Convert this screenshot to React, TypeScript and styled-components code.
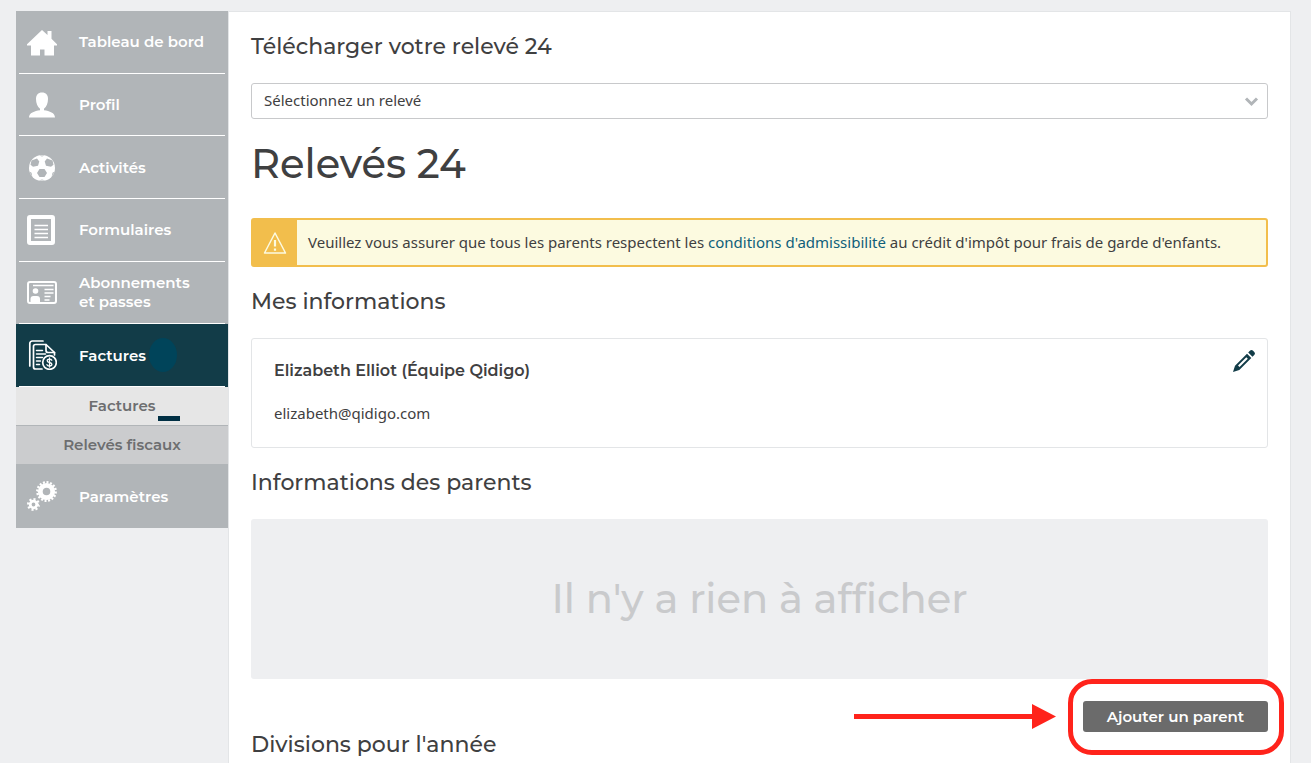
import React from "react";
import styled, { createGlobalStyle, css } from "styled-components";

const heading = `Montserrat, Inter, sans-serif`;
const text = `"Noto Sans", "Open Sans", sans-serif`;

const GlobalStyle = createGlobalStyle`
  *, *::before, *::after { box-sizing: border-box; }
  body {
    margin: 0;
    background: #eeeff1;
    color: #3f4041;
    font: 400 15px/20px ${text};
  }
  ul, h1, h2, h3, p { margin: 0; padding: 0; }
  ul { list-style: none; }
`;

const Page = styled.div`
  display: flex;
  min-height: 100vh;
  padding: 11px 20px 0 16px;
`;

const Sidebar = styled.nav`
  flex: none;
  align-self: flex-start;
  width: 212px;
  background: #b1b5b8;
  font-family: ${heading};
`;

const Menu = styled.ul`
  display: grid;
  grid-auto-rows: 1fr;
  height: 376px;
`;

const MenuItem = styled.li<{ $active?: boolean }>`
  display: flex;
  padding: 0 3px;
  background: ${(p) => (p.$active ? "#123c48" : "transparent")};
`;

const MenuLink = styled.a<{ $last?: boolean }>`
  flex: 1;
  display: flex;
  align-items: center;
  gap: 22px;
  padding-left: 8px;
  border-bottom: ${(p) => (p.$last ? "0" : "1px solid #fff")};
  color: #fff;
  font-size: 15px;
  font-weight: 600;
  line-height: 19px;
  text-decoration: none;

  svg { flex: none; }
`;

const LastItem = styled.div`
  display: flex;
  height: 64px;
  padding: 0 3px;
`;

const MenuLabel = styled.span`
  position: relative;
`;

const Blot = styled.span`
  position: absolute;
  left: 70px;
  top: -8px;
  width: 28px;
  height: 34px;
  border-radius: 50%;
  background: #00445a;
`;

const Dash = styled.span`
  position: absolute;
  left: 142px;
  bottom: 4px;
  width: 22px;
  height: 5px;
  background: #002f44;
`;

const SubItem = styled.li<{ $current?: boolean }>`
  position: relative;
  background: ${(p) => (p.$current ? "#e6e6e6" : "#cbccce")};
  ${(p) => p.$current && css`border-bottom: 1px solid #b1b5b8;`}
`;

const SubLink = styled.a`
  display: block;
  color: #6d6e70;
  font-size: 15px;
  font-weight: 600;
  line-height: 38px;
  text-align: center;
  text-decoration: none;
`;

const Panel = styled.main`
  flex: 1;
  min-width: 0;
  padding: 21px 22px 3px;
  background: #fff;
  border: 1px solid #e3e5e7;
  border-bottom: 0;
`;

const Title = styled.h1`
  margin: 21px 0 30px;
  font: 500 40px/48px ${heading};
`;

const Subtitle = styled.h2`
  margin: 21px 0 22px;
  font: 500 22px/28px ${heading};

  &:first-child { margin-top: 0; }
`;

const SelectField = styled.div`
  display: grid;
  align-items: center;

  > * { grid-area: 1 / 1; }
  svg { justify-self: end; margin: 2px 9px 0 0; pointer-events: none; }
`;

const Select = styled.select`
  appearance: none;
  width: 100%;
  height: 36px;
  padding: 0 36px 2px 12px;
  border: 1px solid #c8c9cb;
  border-radius: 3px;
  background: #fff;
  color: #3f4041;
  font: 400 15px/20px ${text};
`;

const Alert = styled.div`
  display: flex;
  border: 2px solid #f2be4c;
  border-radius: 3px;
  background: #fcfae0;
`;

const AlertIcon = styled.div`
  display: flex;
  align-items: center;
  justify-content: center;
  width: 44px;
  background: #f2be4c;
`;

const AlertText = styled.p`
  padding: 12px 11px 13px;
`;

const TextLink = styled.a`
  color: #0f5f7a;
  text-decoration: none;
`;

const Card = styled.section`
  display: flex;
  justify-content: space-between;
  align-items: flex-start;
  height: 110px;
  padding: 11px 12px 0 22px;
  border: 1px solid #e3e5e7;
  border-radius: 3px;
`;

const Person = styled.h3`
  margin: 11px 0 22px;
  font: 600 16px/20px ${heading};
`;

const IconButton = styled.button`
  display: flex;
  padding: 0;
  border: 0;
  background: none;
  cursor: pointer;
`;

const Empty = styled.div`
  display: flex;
  align-items: center;
  justify-content: center;
  height: 160px;
  border-radius: 3px;
  background: #eeeff1;
  color: #c9cacc;
  font: 500 40px/48px ${heading};
`;

const Footer = styled.div`
  display: flex;
  justify-content: space-between;
  align-items: flex-start;
  margin-top: 22px;
`;

const FooterTitle = styled.h2`
  margin-top: 30px;
  font: 500 22px/28px ${heading};
`;

const ActionArea = styled.div`
  position: relative;
`;

const Button = styled.button`
  display: block;
  width: 185px;
  height: 31px;
  padding: 0;
  border: 0;
  border-radius: 3px;
  background: #6b6b6b;
  color: #fff;
  font: 600 15px/20px ${heading};
  cursor: pointer;
`;

const Highlight = styled.span`
  position: absolute;
  inset: -22px -16px -23px -15px;
  border: 5px solid #ff231b;
  border-radius: 24px;
  pointer-events: none;
`;

const Arrow = styled.svg`
  position: absolute;
  right: 212px;
  top: 3px;
  pointer-events: none;
`;

const HomeIcon = () => (
  <svg width="30" height="30" viewBox="0 0 30 30" fill="#fff" aria-hidden="true">
    <path d="M15 3 20.500 8V4H24.500V11.800L30 17.200V18.500H27V28.500H17.500V22.500H13V28.500H4V18.500H0V17.200Z" />
  </svg>
);

const ProfileIcon = () => (
  <svg width="30" height="30" viewBox="0 0 30 30" fill="#fff" aria-hidden="true">
    <path d="M15 3.500c4 0 6 2.500 6 6.500 0 4.500-1.500 7.500-4 9.800v1.400c5.500.8 11 2.500 11 7.300H2c0-4.800 5.500-6.500 11-7.300v-1.400C10.500 17.500 9 14.500 9 10c0-4 2-6.500 6-6.500Z" />
  </svg>
);

const BallIcon = () => (
  <svg width="30" height="30" viewBox="0 0 30 30" aria-hidden="true">
    <circle cx="15" cy="16" r="13" fill="#fff" />
    <g fill="#b1b5b8">
      <path d="M12.500 17h5l2.500 4-2.500 4h-5l-2.500-4Z" />
      <path d="M4.500 8.500 10 6.500l2.300 3-1.300 4.300-5 .9-2.500-2Z" />
      <path d="M25.500 8.500 20 6.500l-2.300 3 1.300 4.300 5 .9 2.500-2Z" />
      <path d="M2.200 19.500l2.300 1.200.8 4Z" />
      <path d="M27.800 19.500l-2.300 1.200-.8 4Z" />
      <path d="M12.300 3.500h5.400L15 4.600Z" />
      <path d="M11.500 28.600l3.500-1 3.500 1Z" />
    </g>
  </svg>
);

const FormIcon = () => (
  <svg width="30" height="30" viewBox="0 0 30 30" fill="none" stroke="#fff" aria-hidden="true">
    <rect x="2" y="2" width="24" height="26" rx="1" strokeWidth="4" />
    <path d="M7.500 10.500h13.500M7.500 14.500h13.500M7.500 18.500h13.500M7.500 22.500h13.500" strokeWidth="1.600" />
  </svg>
);

const PassIcon = () => (
  <svg width="30" height="30" viewBox="0 0 30 30" fill="none" stroke="#fff" aria-hidden="true">
    <rect x="1" y="5" width="28" height="21" rx="2" strokeWidth="2" />
    <path d="M6 8.500h20.500M17.500 12.500h9M17.500 16h9M17.500 19.500h6M17.500 23h5" strokeWidth="1.500" />
    <circle cx="8.500" cy="14" r="2.800" fill="#fff" stroke="none" />
    <path d="M3.500 25v-3a3 3 0 0 1 3-3H10a3 3 0 0 1 3 3v3Z" fill="#fff" stroke="none" />
  </svg>
);

const InvoiceIcon = () => (
  <svg width="30" height="30" viewBox="0 0 30 30" fill="none" stroke="#fff" strokeWidth="1.700" strokeLinecap="round" strokeLinejoin="round" aria-hidden="true">
    <path d="M2.800 26V3.500a2.500 2.500 0 0 1 2.500-2.500H16" />
    <path d="M15 29H8.500a2 2 0 0 1-2-2V6.500a2 2 0 0 1 2-2H19l8.500 8V15" />
    <path d="M19 4.500v6a2 2 0 0 0 2 2h6.500" />
    <path d="M9.500 10.500h6M9.500 14h9M9.500 17.500h6M9.500 21h4M9.500 24.500h3" strokeWidth="1.500" />
    <circle cx="22.500" cy="22.500" r="6.800" />
    <path d="M24.800 20.200c-.4-.8-1.200-1.100-2.300-1.100-1.400 0-2.300.6-2.300 1.600 0 2.400 4.700 1.200 4.700 3.600 0 1-.9 1.700-2.400 1.700-1.200 0-2.100-.4-2.500-1.300M22.500 18v9" strokeWidth="1.300" />
  </svg>
);

const GearsIcon = () => (
  <svg width="30" height="30" viewBox="0 0 30 30" fill="none" stroke="#fff" aria-hidden="true">
    <circle cx="19.500" cy="10.500" r="6.200" strokeWidth="4.800" />
    <circle cx="19.500" cy="10.500" r="9.200" strokeWidth="2.400" pathLength="32" strokeDasharray="1.100 0.900" />
    <circle cx="6.500" cy="23.500" r="3.300" strokeWidth="2.800" />
    <circle cx="6.500" cy="23.500" r="5.400" strokeWidth="2.200" pathLength="16" strokeDasharray="1 1" />
  </svg>
);

const WarningIcon = () => (
  <svg width="24" height="24" viewBox="0 0 24 24" fill="none" stroke="#fcfae0" aria-hidden="true">
    <path d="M12 2 22.500 22H1.500Z" strokeWidth="1.500" strokeLinejoin="round" />
    <path d="M12 9v6.500M12 17.500v2.200" strokeWidth="2.200" />
  </svg>
);

const PencilIcon = () => (
  <svg width="22" height="22" viewBox="0 0 22 22" fill="#123c48" aria-hidden="true">
    <path d="M15.200 2.500l1.700-1.700c1-1 2.200-1 3.200 0l1.100 1.100c1 1 1 2.200 0 3.200l-1.700 1.700Z" />
    <path fillRule="evenodd" d="M14 3.700 18.300 8 6.300 20 0 22l2-6.300ZM13.300 7.200 5 15.500l1.500 1.500 8.300-8.300Z" />
  </svg>
);

const ChevronIcon = () => (
  <svg width="15" height="10" viewBox="0 0 15 10" fill="none" stroke="#b1b5b8" strokeWidth="3" aria-hidden="true">
    <path d="M2 1.500 7.500 7 13 1.500" />
  </svg>
);

const entries = [
  { label: "Tableau de bord", Icon: HomeIcon },
  { label: "Profil", Icon: ProfileIcon },
  { label: "Activités", Icon: BallIcon },
  { label: "Formulaires", Icon: FormIcon },
  { label: <>Abonnements<br />et passes</>, Icon: PassIcon },
  { label: "Factures", Icon: InvoiceIcon, active: true },
];

export default function App() {
  return (
    <>
      <GlobalStyle />
      <Page>
        <Sidebar>
          <Menu>
            {entries.map(({ label, Icon, active }, i) => (
              <MenuItem key={i} $active={active}>
                <MenuLink href="#">
                  <Icon />
                  <MenuLabel>
                    {label}
                    {active && <Blot />}
                  </MenuLabel>
                </MenuLink>
              </MenuItem>
            ))}
          </Menu>
          <ul>
            <SubItem $current>
              <SubLink href="#">Factures</SubLink>
              <Dash />
            </SubItem>
            <SubItem>
              <SubLink href="#">Relevés fiscaux</SubLink>
            </SubItem>
          </ul>
          <LastItem>
            <MenuLink href="#" $last>
              <GearsIcon />
              <MenuLabel>Paramètres</MenuLabel>
            </MenuLink>
          </LastItem>
        </Sidebar>

        <Panel>
          <Subtitle id="download">Télécharger votre relevé 24</Subtitle>
          <SelectField>
            <Select aria-labelledby="download">
              <option>Sélectionnez un relevé</option>
            </Select>
            <ChevronIcon />
          </SelectField>

          <Title>Relevés 24</Title>
          <Alert>
            <AlertIcon><WarningIcon /></AlertIcon>
            <AlertText>
              Veuillez vous assurer que tous les parents respectent les{" "}
              <TextLink href="#">conditions d'admissibilité</TextLink> au crédit d'impôt pour frais de garde d'enfants.
            </AlertText>
          </Alert>

          <Subtitle>Mes informations</Subtitle>
          <Card>
            <div>
              <Person>Elizabeth Elliot (Équipe Qidigo)</Person>
              <p>elizabeth@qidigo.com</p>
            </div>
            <IconButton type="button" aria-label="Modifier"><PencilIcon /></IconButton>
          </Card>

          <Subtitle>Informations des parents</Subtitle>
          <Empty>Il n'y a rien à afficher</Empty>

          <Footer>
            <FooterTitle>Divisions pour l'année</FooterTitle>
            <ActionArea>
              <Button type="button">Ajouter un parent</Button>
              <Highlight />
              <Arrow width="202" height="26" viewBox="0 0 202 26" fill="#ff231b" aria-hidden="true">
                <path d="M0 10H178V0L202 12.500 178 25V15H0Z" />
              </Arrow>
            </ActionArea>
          </Footer>
        </Panel>
      </Page>
    </>
  );
}
